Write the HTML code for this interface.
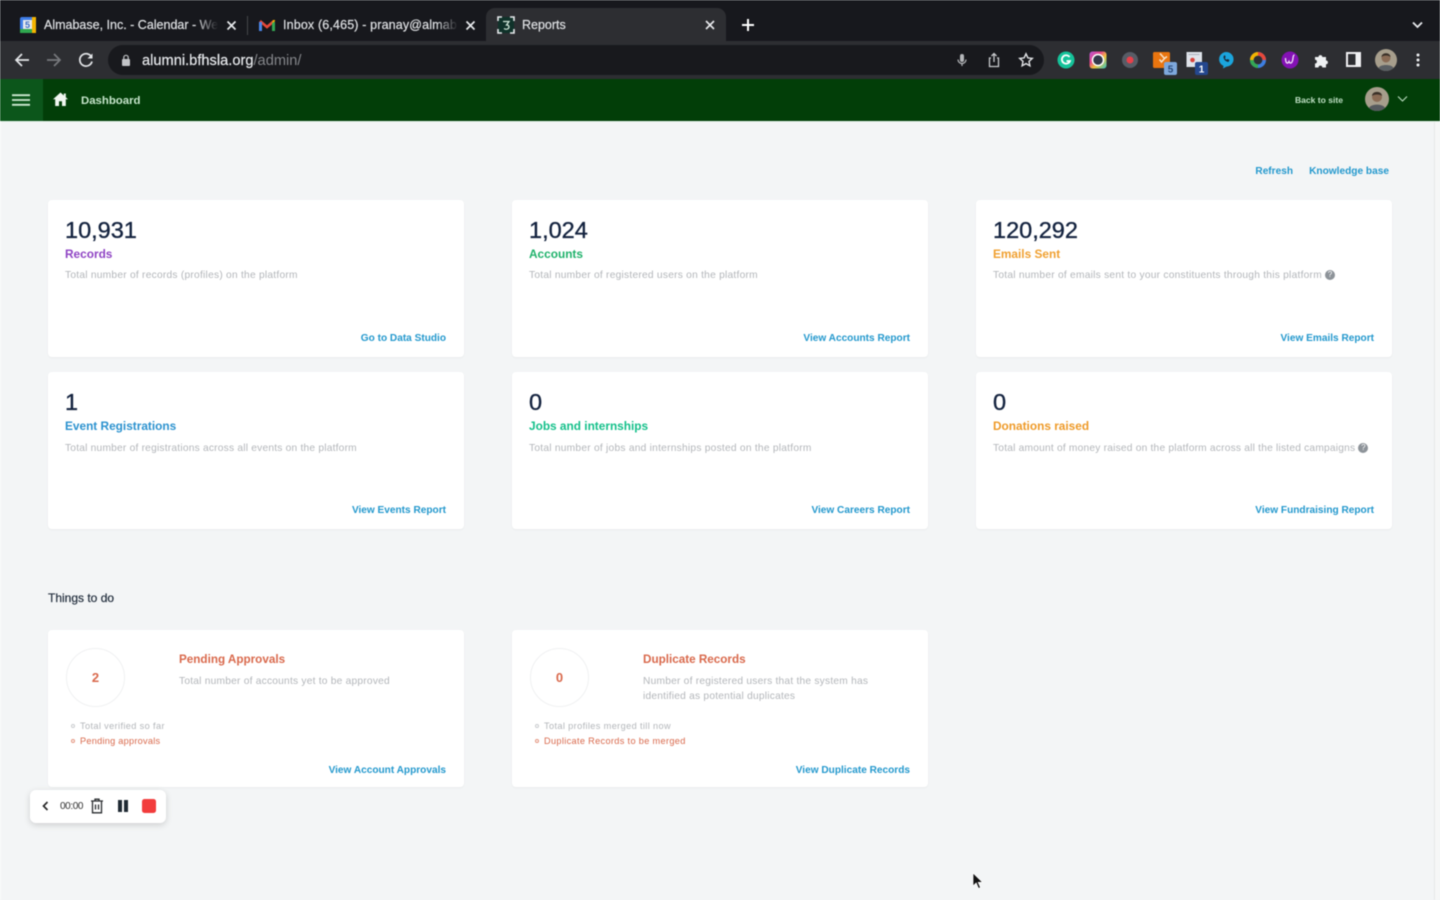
<!DOCTYPE html>
<html><head><meta charset="utf-8"><title>Reports</title>
<style>
*{box-sizing:border-box}
html,body{margin:0;padding:0;width:1440px;height:900px;overflow:hidden;background:#f3f5f6;font-family:"Liberation Sans",sans-serif}
#all{position:absolute;left:0;top:0;width:1440px;height:900px;filter:blur(.45px)}
.a{position:absolute;white-space:nowrap}
#strip{left:0;top:0;width:1440px;height:42px;background:#17181d}
#tool{left:0;top:41px;width:1440px;height:38px;background:#2d2e32}
#omni{left:108px;top:45px;width:936px;height:30px;border-radius:15px;background:#18191d}
#tab{left:486px;top:8px;width:240px;height:38px;background:#2d2e32;border-radius:9px 9px 0 0}
.tt{font-size:12.5px;color:#dfe1e4;top:18px;line-height:14px;-webkit-text-stroke:.2px #dfe1e4}
.fade{position:absolute;top:16px;width:26px;height:18px;background:linear-gradient(90deg,rgba(23,24,29,0),#17181d 85%)}
#nav{left:0;top:79px;width:1440px;height:42px;background:#023e08}
#navl{left:0;top:79px;width:43px;height:42px;background:#0c561b}
.card{position:absolute;background:#fff;border-radius:4px;box-shadow:0 1px 2px rgba(0,0,0,.04);width:416px;height:157px}
.n{position:absolute;left:17px;top:17px;font-size:23.5px;line-height:26px;color:#14233f;white-space:nowrap;-webkit-text-stroke:.35px #14233f}
.l{position:absolute;left:17px;top:47px;font-size:11.85px;line-height:14px;font-weight:bold;white-space:nowrap}
.d{position:absolute;left:17px;top:70px;font-size:10.2px;letter-spacing:.25px;line-height:12px;color:#b3b6ba;white-space:nowrap}
.k{position:absolute;right:18px;top:133px;font-size:10.1px;line-height:12px;font-weight:bold;color:#2398cd;white-space:nowrap}
.q{display:inline-block;width:10px;height:10px;border-radius:50%;background:#8d9399;color:#fff;font-size:8px;line-height:10px;text-align:center;margin-left:3px;vertical-align:1px;letter-spacing:0}
.c{position:absolute;left:18px;top:18px;width:59px;height:59px;border:1px solid #f0f1f2;border-radius:50%;text-align:center;line-height:57px;font-size:13px;font-weight:bold;color:#d9694c}
.h{position:absolute;left:131px;top:23px;font-size:11.7px;line-height:14px;font-weight:bold;color:#d9694c;white-space:nowrap}
.e{position:absolute;left:131px;top:44px;font-size:10.2px;letter-spacing:.23px;line-height:15px;color:#b3b6ba;white-space:nowrap}
.li{position:absolute;left:32px;font-size:9.2px;line-height:12px;white-space:nowrap}
.li i{position:absolute;left:-9px;top:4px;width:4px;height:4px;border-radius:50%;border:1px solid currentColor;opacity:.7}
</style></head><body>
<div id="all">
<div class="a" id="strip"></div>
<div class="a" id="tool"></div>
<div class="a" id="tab"></div>
<div class="a" id="omni"></div>

<!-- Tab 1 -->
<svg class="a" style="left:19px;top:16px" width="18" height="18" viewBox="0 0 18 18"><rect x="1" y="1" width="16" height="16" rx="2" fill="#3f7ee8"/><rect x="1" y="13" width="16" height="4" fill="#2fa84f"/><rect x="13" y="1" width="4" height="16" fill="#f4b400"/><rect x="4" y="4" width="9" height="9" fill="#e8eaed"/><text x="8.5" y="12" font-size="9" font-weight="bold" text-anchor="middle" fill="#3f6fc8" font-family="Liberation Sans">5</text></svg>
<div class="a tt" style="left:44px;width:176px;overflow:hidden">Almabase, Inc. - Calendar - We</div>
<div class="fade" style="left:196px"></div>
<svg class="a" style="left:226px;top:20px" width="11" height="11" viewBox="0 0 11 11"><path d="M1.500 1.500l8 8M9.500 1.500l-8 8" stroke="#e8eaed" stroke-width="1.700"/></svg>
<div class="a" style="left:247px;top:16px;width:1px;height:19px;background:#45464a"></div>
<!-- Tab 2 -->
<svg class="a" style="left:259px;top:19px" width="16" height="12" viewBox="0 0 16 12"><path d="M1 2l7 6 7-6" stroke="#e8483a" stroke-width="2.600" fill="none"/><path d="M1.500 12V3" stroke="#4a86e8" stroke-width="3"/><path d="M14.500 12V3" stroke="#34a853" stroke-width="3"/><path d="M13 4.500L16 2V1h-2z" fill="#f4b400"/></svg>
<div class="a tt" style="left:283px;width:176px;overflow:hidden;letter-spacing:.15px">Inbox (6,465) - pranay@almab</div>
<div class="fade" style="left:436px"></div>
<svg class="a" style="left:465px;top:20px" width="11" height="11" viewBox="0 0 11 11"><path d="M1.500 1.500l8 8M9.500 1.500l-8 8" stroke="#e8eaed" stroke-width="1.700"/></svg>
<!-- Tab 3 -->
<svg class="a" style="left:497px;top:16px" width="18" height="18" viewBox="0 0 18 18"><rect x="1" y="1" width="16" height="16" rx="2" fill="#10322a"/><path d="M1 5V1h4M13 1h4v4M17 13v4h-4M5 17H1v-4" stroke="#e8eaed" stroke-width="1.600" fill="none"/><path d="M6 5.500h6L9.500 9c2 0 2.500 1 2.500 2 0 2-3 3-5 1.500" stroke="#cfe5d8" stroke-width="1.300" fill="none"/></svg>
<div class="a tt" style="left:522px">Reports</div>
<svg class="a" style="left:705px;top:20px" width="10" height="10" viewBox="0 0 10 10"><path d="M1 1l8 8M9 1L1 9" stroke="#e8eaed" stroke-width="1.600"/></svg>
<svg class="a" style="left:741px;top:18px" width="14" height="14" viewBox="0 0 14 14"><path d="M7 1v12M1 7h12" stroke="#fff" stroke-width="2"/></svg>
<svg class="a" style="left:1412px;top:21px" width="11" height="8" viewBox="0 0 11 8"><path d="M1 1.500l4.500 4.500L10 1.500" stroke="#e8eaed" stroke-width="1.800" fill="none"/></svg>

<!-- Toolbar -->
<svg class="a" style="left:14px;top:52px" width="16" height="16" viewBox="0 0 16 16"><path d="M15 8H2M8 2L2 8l6 6" stroke="#e3e5e8" stroke-width="1.700" fill="none"/></svg>
<svg class="a" style="left:46px;top:52px" width="16" height="16" viewBox="0 0 16 16"><path d="M1 8h13M8 2l6 6-6 6" stroke="#77797d" stroke-width="1.700" fill="none"/></svg>
<svg class="a" style="left:78px;top:52px" width="16" height="16" viewBox="0 0 16 16"><path d="M13.500 5A6.200 6.200 0 1 0 14 9.500" stroke="#e3e5e8" stroke-width="1.700" fill="none"/><path d="M14.500 1.500v5h-5z" fill="#e3e5e8"/></svg>
<svg class="a" style="left:121px;top:54px" width="10" height="12" viewBox="0 0 10 12"><rect x="1" y="5" width="8" height="7" rx="1" fill="#c2c4c7"/><path d="M2.800 5.500V3.500a2.200 2.200 0 0 1 4.400 0v2" stroke="#c2c4c7" stroke-width="1.200" fill="none"/></svg>
<div class="a" style="left:142px;top:52px;font-size:14.6px;line-height:18px;color:#e8eaed;-webkit-text-stroke:.2px #e8eaed;letter-spacing:.02px">alumni.bfhsla.org<span style="color:#85878b;-webkit-text-stroke:0">/admin/</span></div>
<svg class="a" style="left:957px;top:53px" width="10" height="14" viewBox="0 0 10 14"><rect x="3" y="1" width="4" height="8" rx="2" fill="#b4b6b9"/><path d="M1 6.500a4 4 0 0 0 8 0M5 10.500V13" stroke="#b4b6b9" stroke-width="1.200" fill="none"/></svg>
<svg class="a" style="left:987px;top:52px" width="14" height="16" viewBox="0 0 14 16"><path d="M4 6H2.500v8.500h9V6H10M7 10V1.500M4.500 4L7 1.500 9.500 4" stroke="#c8cacd" stroke-width="1.300" fill="none"/></svg>
<svg class="a" style="left:1018px;top:52px" width="16" height="16" viewBox="0 0 16 16"><path d="M8 1.800l1.900 4.100 4.400.5-3.300 3 .9 4.400L8 11.600l-3.900 2.200.9-4.400-3.300-3 4.400-.5z" stroke="#e3e5e8" stroke-width="1.400" fill="none"/></svg>

<!-- Extensions -->
<svg class="a" style="left:1056px;top:50px" width="20" height="20" viewBox="0 0 20 20"><circle cx="10" cy="10" r="8.500" fill="#15c39a"/><path d="M13.500 7A4.200 4.200 0 1 0 14 11h-3.500" stroke="#fff" stroke-width="1.800" fill="none"/></svg>
<svg class="a" style="left:1088px;top:50px" width="20" height="20" viewBox="0 0 20 20"><defs><linearGradient id="g1" x1="0" y1="0" x2="1" y2="1"><stop offset="0" stop-color="#b45ad8"/><stop offset=".35" stop-color="#e8458b"/><stop offset=".6" stop-color="#f2c33a"/><stop offset="1" stop-color="#2fc4c4"/></linearGradient></defs><rect x="1.500" y="1.500" width="17" height="17" rx="3" fill="url(#g1)"/><circle cx="10" cy="10" r="5.500" fill="#33384a" stroke="#fff" stroke-width="1.500"/></svg>
<svg class="a" style="left:1120px;top:50px" width="20" height="20" viewBox="0 0 20 20"><circle cx="10" cy="10" r="8" fill="#575c66"/><circle cx="10" cy="10" r="3.500" fill="#e8404a"/></svg>
<svg class="a" style="left:1152px;top:50px" width="26" height="26" viewBox="0 0 26 26"><rect x="1" y="2" width="17" height="16" rx="1.500" fill="#e9750f"/><path d="M8 3.500l4.500 5-3 3.500-2-2.500M12.500 8.500l2.500-2" stroke="#f8e2c8" stroke-width="1.500" fill="none"/><rect x="12" y="12" width="13" height="13" rx="2" fill="#7ea8dc"/><text x="18.500" y="22.500" font-size="10" font-weight="bold" fill="#2a4a78" text-anchor="middle" font-family="Liberation Sans">5</text></svg>
<svg class="a" style="left:1184px;top:50px" width="26" height="26" viewBox="0 0 26 26"><path d="M2.500 2h15.500v12l-4 3H2.500z" fill="#dfe3ea"/><path d="M4.500 4.500h11" stroke="#aab0ba" stroke-width="1"/><circle cx="8.500" cy="10" r="2.300" fill="#d8433b"/><rect x="11" y="12" width="13" height="13" rx="2" fill="#24478e"/><text x="17.500" y="22.500" font-size="10" font-weight="bold" fill="#fff" text-anchor="middle" font-family="Liberation Sans">1</text></svg>
<svg class="a" style="left:1217px;top:50px" width="18" height="20" viewBox="0 0 18 20"><path d="M9 2a7.300 7.300 0 0 1 .5 14.600L6 18.500l.5-2.500A7.300 7.300 0 0 1 9 2z" fill="#1ba5dd"/><path d="M6.500 6.500c0 3 2 5 5 5.500l1-2-2-1-1 .8c-.8-.5-1.300-1-1.600-1.800l.8-1-1-2z" fill="#1a2a38"/></svg>
<svg class="a" style="left:1248px;top:50px" width="20" height="20" viewBox="0 0 20 20"><g fill="none" stroke-width="3.600"><circle cx="10" cy="10" r="6.200" stroke="#3d7ee0"/><path d="M10 3.800A6.200 6.200 0 0 1 16.200 10" stroke="#e8483a"/><path d="M3.800 10A6.200 6.200 0 0 1 10 3.800" stroke="#f4b400"/><path d="M3.800 10A6.200 6.200 0 0 0 10 16.200" stroke="#34a853"/></g></svg>
<svg class="a" style="left:1280px;top:50px" width="20" height="20" viewBox="0 0 20 20"><circle cx="10" cy="10" r="8.500" fill="#8411b5"/><path d="M5.500 8c0 6 2.500 6 3.500 3.500 .8 2.500 3.500 2.500 4-3.500 .2-2 .8-3 1.500-3" stroke="#f4e9fb" stroke-width="1.300" fill="none"/></svg>
<svg class="a" style="left:1314px;top:52px" width="16" height="16" viewBox="0 0 16 16"><path d="M1 5h3.500a1.900 1.900 0 1 1 3.800 0H12v3.500a1.900 1.900 0 1 1 0 3.800V15.500H8.300a1.900 1.900 0 1 0-3.800 0H1v-4a1.900 1.900 0 1 0 0-3.800z" fill="#eef0f2"/></svg>
<svg class="a" style="left:1346px;top:52px" width="15" height="15" viewBox="0 0 15 15"><rect x="1" y="1" width="13" height="13" fill="#2d2e32" stroke="#f0f1f3" stroke-width="2"/><rect x="9.500" y="1" width="4.500" height="13" fill="#f0f1f3"/></svg>
<svg class="a" style="left:1375px;top:49px" width="22" height="22" viewBox="0 0 22 22"><circle cx="11" cy="11" r="11" fill="#a79e8c"/><circle cx="11" cy="9" r="4.500" fill="#8a6b55"/><path d="M3.500 19c1.500-4 13.500-4 15 0a11 11 0 0 1-15 0z" fill="#5b5f63"/><path d="M6.500 8c0-5 9-5 9 0-2-2-7-2-9 0z" fill="#3a3028"/></svg>
<svg class="a" style="left:1415px;top:53px" width="6" height="14" viewBox="0 0 6 14"><circle cx="3" cy="2" r="1.500" fill="#eef0f2"/><circle cx="3" cy="7" r="1.500" fill="#eef0f2"/><circle cx="3" cy="12" r="1.500" fill="#eef0f2"/></svg>

<!-- Nav -->
<div class="a" id="nav"></div><div class="a" id="navl"></div>
<svg class="a" style="left:12px;top:94px" width="18" height="12" viewBox="0 0 18 12"><path d="M0 1.200h18M0 6h18M0 10.800h18" stroke="#cfe9d3" stroke-width="1.800"/></svg>
<svg class="a" style="left:53px;top:92px" width="15" height="14" viewBox="0 0 15 14"><path d="M7.500 .5L0 7.300h2.200V14h3.800V9.300h3V14h3.800V7.300H15l-2.200-2V1.500h-2v2z" fill="#f1f6f1"/></svg>
<div class="a" style="left:81px;top:94px;font-size:11.400px;line-height:14px;font-weight:bold;color:#c6e5cb">Dashboard</div>
<div class="a" style="left:1295px;top:94px;font-size:8.550px;line-height:12px;font-weight:bold;color:#bfe0c4">Back to site</div>
<svg class="a" style="left:1365px;top:87px" width="24" height="24" viewBox="0 0 24 24"><circle cx="12" cy="12" r="12" fill="#a79e8c"/><circle cx="12" cy="10" r="5" fill="#8a6b55"/><path d="M4 21c1.500-4.500 14.500-4.500 16 0a12 12 0 0 1-16 0z" fill="#555a5e"/><path d="M7 9c0-5.500 10-5.500 10 0-2-2-8-2-10 0z" fill="#3a3028"/></svg>
<svg class="a" style="left:1397px;top:95px" width="11" height="8" viewBox="0 0 11 8"><path d="M1 1.500l4.500 4.500L10 1.500" stroke="#bfe0c4" stroke-width="1.100" fill="none"/></svg>

<!-- Page edges -->
<div class="a" style="left:0;top:121px;width:1440px;height:1px;background:#e4f3ea"></div>
<div class="a" style="left:0;top:121px;width:1px;height:779px;background:#fbfcfc"></div>
<div class="a" style="left:1434px;top:122px;width:6px;height:778px;background:#f6f7f7;border-left:1px solid #e7e8e9"></div>

<div class="a" style="right:147px;top:166px;font-size:10.100px;line-height:12px;font-weight:bold;color:#2398cd">Refresh</div>
<div class="a" style="right:51px;top:166px;font-size:10.150px;line-height:12px;font-weight:bold;color:#2398cd">Knowledge base</div>

<!-- Stat cards -->
<div class="card" style="left:48px;top:200px"><div class="n">10,931</div><div class="l" style="color:#8f44c4">Records</div><div class="d">Total number of records (profiles) on the platform</div><div class="k">Go to Data Studio</div></div>
<div class="card" style="left:512px;top:200px"><div class="n">1,024</div><div class="l" style="color:#1fb26b">Accounts</div><div class="d">Total number of registered users on the platform</div><div class="k">View Accounts Report</div></div>
<div class="card" style="left:976px;top:200px"><div class="n">120,292</div><div class="l" style="color:#f0a030">Emails Sent</div><div class="d">Total number of emails sent to your constituents through this platform<span class="q">?</span></div><div class="k">View Emails Report</div></div>
<div class="card" style="left:48px;top:372px"><div class="n">1</div><div class="l" style="color:#2c92cf">Event Registrations</div><div class="d" style="top:71px;letter-spacing:.22px">Total number of registrations across all events on the platform</div><div class="k">View Events Report</div></div>
<div class="card" style="left:512px;top:372px"><div class="n">0</div><div class="l" style="color:#14c08a">Jobs and internships</div><div class="d" style="top:71px">Total number of jobs and internships posted on the platform</div><div class="k">View Careers Report</div></div>
<div class="card" style="left:976px;top:372px"><div class="n">0</div><div class="l" style="color:#ee9a28">Donations raised</div><div class="d" style="top:71px;letter-spacing:.215px">Total amount of money raised on the platform across all the listed campaigns<span class="q">?</span></div><div class="k">View Fundraising Report</div></div>

<div class="a" style="left:48px;top:591px;font-size:12px;line-height:14px;color:#1f2b3a;-webkit-text-stroke:.2px #1f2b3a">Things to do</div>

<!-- Todo cards -->
<div class="card" style="left:48px;top:630px"><div class="c">2</div><div class="h">Pending Approvals</div><div class="e">Total number of accounts yet to be approved</div>
<div class="li" style="top:90px;color:#b3b6ba;letter-spacing:.37px"><i></i>Total verified so far</div><div class="li" style="top:105px;color:#d9694c;letter-spacing:.25px"><i></i>Pending approvals</div><div class="k" style="top:133px;transform:translateY(2px)">View Account Approvals</div></div>
<div class="card" style="left:512px;top:630px"><div class="c">0</div><div class="h">Duplicate Records</div><div class="e">Number of registered users that the system has<br>identified as potential duplicates</div>
<div class="li" style="top:90px;color:#b3b6ba;letter-spacing:.37px"><i></i>Total profiles merged till now</div><div class="li" style="top:105px;color:#d9694c;letter-spacing:.33px"><i></i>Duplicate Records to be merged</div><div class="k" style="top:133px;transform:translateY(2px)">View Duplicate Records</div></div>

<!-- Recorder -->
<div class="a" style="left:30px;top:790px;width:136px;height:33px;background:#fff;border-radius:6px;box-shadow:0 2px 7px rgba(0,0,0,.16)"></div>
<svg class="a" style="left:42px;top:801px" width="7" height="10" viewBox="0 0 7 10"><path d="M5.500 1L1.500 5l4 4" stroke="#222" stroke-width="1.600" fill="none"/></svg>
<div class="a" style="left:60px;top:801px;font-size:10px;line-height:12px;color:#333;letter-spacing:-.4px">00:00</div>
<svg class="a" style="left:90px;top:798px" width="14" height="16" viewBox="0 0 14 16"><path d="M1 3h12M5 3V1.200h4V3M2.500 3v11.800h9V3M5.500 6.500v5M8.500 6.500v5" stroke="#2a2d30" stroke-width="1.300" fill="none"/></svg>
<div class="a" style="left:118px;top:800px;width:3.500px;height:12px;background:#1f2a33"></div>
<div class="a" style="left:124px;top:800px;width:3.500px;height:12px;background:#1f2a33"></div>
<div class="a" style="left:142px;top:799px;width:14px;height:14px;border-radius:2.500px;background:#f23c3c"></div>

<!-- Cursor -->
<svg class="a" style="left:972px;top:872px" width="12" height="18" viewBox="0 0 12 18"><path d="M1 1v13l3.200-3 2.300 5.500 2-.9-2.300-5.300H10.500z" fill="#111" stroke="#fff" stroke-width=".7"/></svg>
</div>
</body></html>
